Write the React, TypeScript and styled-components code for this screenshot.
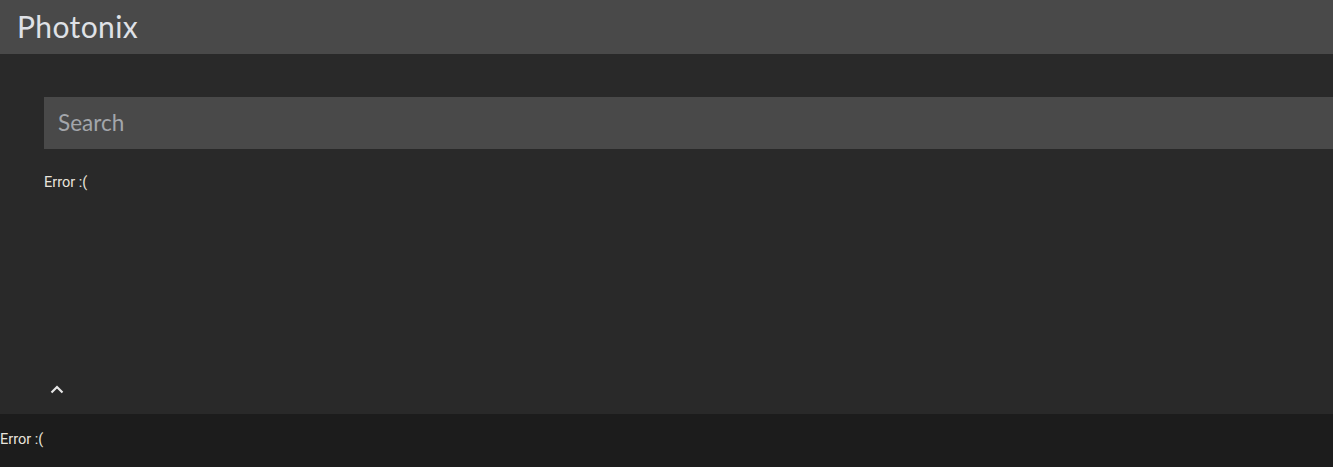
import React from "react";
import styled, { createGlobalStyle } from "styled-components";

const Global = createGlobalStyle`
  html, body { margin: 0; padding: 0; background: #292929; overflow: hidden; }
  body { font-family: Lato, "Open Sans", sans-serif; }
`;

const Page = styled.div`
  display: flex;
  flex-direction: column;
  width: 1333px;
  height: 467px;
  overflow: hidden;
`;

const Header = styled.header`
  height: 54px;
  background: #494949;
  display: flex;
  align-items: center;
  padding-left: 17px;
  padding-bottom: 2px;
  box-sizing: border-box;
  flex-shrink: 0;
`;

const Title = styled.h1`
  margin: 0;
  font-family: Lato, "Open Sans", sans-serif;
  font-weight: 400;
  font-size: 30px;
  color: #dfe1e6;
  letter-spacing: 0.4px;
`;

const Main = styled.main`
  flex: 1;
  background: #292929;
  display: flex;
  flex-direction: column;
  padding: 43px 0 0 44px;
  position: relative;
`;

const SearchInput = styled.input`
  box-sizing: border-box;
  width: calc(100% + 20px);
  height: 52px;
  border: none;
  outline: none;
  background: #494949;
  padding: 0 14px 2px;
  font-family: Lato, "Open Sans", sans-serif;
  font-size: 22.5px;
  color: #ddd;
  &::placeholder { color: #a3a6ab; }
`;

const ErrorText = styled.div`
  font-family: Roboto, "Open Sans", sans-serif;
  font-size: 14.5px;
  color: #e8e4dc;
  margin-top: 25px;
`;

const ScrollUp = styled.button`
  margin-top: auto;
  margin-bottom: 19px;
  margin-left: 5px;
  width: 16px;
  height: 12px;
  padding: 0;
  border: none;
  background: transparent;
  display: flex;
  align-items: center;
  justify-content: center;
`;

const Footer = styled.footer`
  height: 53px;
  background: #1c1c1c;
  display: flex;
  align-items: center;
  padding-bottom: 2px;
  box-sizing: border-box;
  flex-shrink: 0;
`;

const FooterError = styled.div`
  font-family: Roboto, "Open Sans", sans-serif;
  font-size: 14.5px;
  color: #e8e4dc;
`;

export default function App() {
  return (
    <Page>
      <Global />
      <Header>
        <Title>Photonix</Title>
      </Header>
      <Main>
        <SearchInput placeholder="Search" />
        <ErrorText>Error :(</ErrorText>
        <ScrollUp aria-label="Scroll up">
          <svg width="14" height="9" viewBox="0 0 14 9">
            <path d="M1.5 7.5 L7 2 L12.5 7.5" stroke="#e6e6e6" strokeWidth="2.2" fill="none" />
          </svg>
        </ScrollUp>
      </Main>
      <Footer>
        <FooterError>Error :(</FooterError>
      </Footer>
    </Page>
  );
}
